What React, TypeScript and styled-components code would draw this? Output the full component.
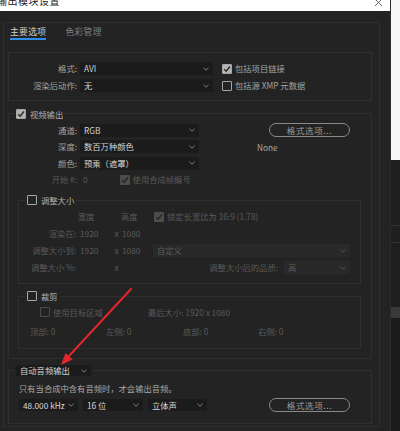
import styled, { createGlobalStyle } from "styled-components";

const GlobalStyle = createGlobalStyle`
  * { box-sizing: border-box; }
  html, body { margin: 0; padding: 0; background: #232323; }
  body {
    font-family: "Noto Sans CJK SC", "Noto Sans", sans-serif;
    font-size: 8.3px;
    color: #a3a3a3;
    overflow: hidden;
  }
`;

const Screen = styled.div`
  position: relative;
  display: flex;
  width: 400px;
  height: 431px;
  overflow: hidden;
`;

const Window = styled.div`
  width: 390px;
  height: 431px;
  background: #232323;
  display: flex;
  flex-direction: column;
`;

const TitleBar = styled.div`
  height: 11px;
  flex-shrink: 0;
  background: #ffffff;
  display: flex;
  justify-content: space-between;
  align-items: flex-start;
  overflow: hidden;
`;

const Title = styled.span`
  font-size: 10px;
  line-height: 12px;
  color: #1c1c1c;
  margin: -5px 0 0 -3px;
  letter-spacing: 0.5px;
`;

const CloseIcon = styled.svg`
  margin: -1px 7px 0 0;
`;

const SideStrip = styled.div`
  width: 10px;
  display: flex;
  flex-direction: column;
  background: #1e1e1e;
  border-left: 1px solid #2b2b2b;
`;

const StripPart = styled.div<{ $h: number; $bg: string; $line?: boolean }>`
  height: ${(p) => p.$h}px;
  flex-shrink: 0;
  background: ${(p) => p.$bg};
  border-bottom: ${(p) => (p.$line ? "1px solid #333" : "none")};
`;

const Panel = styled.div`
  margin: 11px 10px 0 3px;
  height: 405px;
  border: 1px solid #2e2e2e;
  padding: 0 7px 0 4px;
`;

const Tabs = styled.div`
  display: flex;
  gap: 19px;
  padding: 3px 0 0 2px;
`;

const Tab = styled.div<{ $active?: boolean }>`
  font-size: 8.8px;
  line-height: 12px;
  letter-spacing: 0.3px;
  color: ${(p) => (p.$active ? "#cfcfcf" : "#7f7f7f")};
  border-bottom: 2px solid ${(p) => (p.$active ? "#2f8fe8" : "transparent")};
`;

const FormatBox = styled.div`
  margin-top: 12px;
  height: 49px;
  border: 1px solid #2f2f2f;
  padding-top: 9px;
  display: flex;
  flex-direction: column;
  gap: 4px;
`;

const Group = styled.div<{ $h: number; $mt: number; $ml?: number }>`
  margin: ${(p) => p.$mt}px 0 0 ${(p) => p.$ml ?? 0}px;
  height: ${(p) => p.$h}px;
  border: 1px solid #2f2f2f;
  display: flex;
  flex-direction: column;
`;

const Legend = styled.div<{ $ml: number }>`
  display: flex;
  align-items: center;
  gap: 4px;
  width: fit-content;
  height: 10px;
  margin: -5.5px 0 0 ${(p) => p.$ml}px;
  padding: 0 2px;
  background: #232323;
  color: #b0b0b0;
  line-height: 10px;
`;

const Row = styled.div<{ $gap?: number; $mt?: number }>`
  display: flex;
  align-items: center;
  height: 13px;
  line-height: 13px;
  gap: ${(p) => p.$gap ?? 0}px;
  margin-top: ${(p) => p.$mt ?? 0}px;
  white-space: nowrap;
`;

const Label = styled.div<{ $w: number; $dim?: boolean }>`
  width: ${(p) => p.$w}px;
  flex-shrink: 0;
  text-align: right;
  color: ${(p) => (p.$dim ? "#595959" : "#a3a3a3")};
`;

const Text = styled.span<{ $dim?: boolean; $bright?: boolean; $ml?: number }>`
  color: ${(p) => (p.$dim ? "#5a5a5a" : p.$bright ? "#cfcfcf" : "#a3a3a3")};
  margin-left: ${(p) => p.$ml ?? 0}px;
`;

const SelectBox = styled.div<{ $w: number; $dim?: boolean; $h?: number; $ml?: number }>`
  width: ${(p) => p.$w}px;
  height: ${(p) => p.$h ?? 13}px;
  flex-shrink: 0;
  margin-left: ${(p) => p.$ml ?? 0}px;
  display: flex;
  align-items: center;
  justify-content: space-between;
  padding: 0 4px 0 4px;
  background: ${(p) => (p.$dim ? "#292929" : "#1b1b1b")};
  color: ${(p) => (p.$dim ? "#595959" : "#d6d6d6")};
  line-height: 13px;
`;

const Chevron = styled.svg`
  flex-shrink: 0;
`;

function Select({
  w,
  value,
  dim,
  h,
  ml,
}: {
  w: number;
  value: string;
  dim?: boolean;
  h?: number;
  ml?: number;
}) {
  return (
    <SelectBox $w={w} $dim={dim} $h={h} $ml={ml}>
      <span>{value}</span>
      <Chevron width="6" height="4" viewBox="0 0 6 4">
        <path
          d="M0.5 0.8 L3 3.2 L5.5 0.8"
          fill="none"
          stroke={dim ? "#555" : "#8c8c8c"}
          strokeWidth="0.9"
        />
      </Chevron>
    </SelectBox>
  );
}

const Box = styled.div<{ $checked?: boolean; $dim?: boolean }>`
  width: 10px;
  height: 10px;
  flex-shrink: 0;
  border-radius: 1px;
  border: 1.3px solid ${(p) => (p.$dim ? "#4c4c4c" : "#a6a6a6")};
  background: ${(p) =>
    p.$checked ? (p.$dim ? "#4c4c4c" : "#b4b4b4") : "transparent"};
  display: flex;
  align-items: center;
  justify-content: center;
`;

function Check({ checked, dim }: { checked?: boolean; dim?: boolean }) {
  return (
    <Box $checked={checked} $dim={dim}>
      {checked && (
        <svg width="8" height="8" viewBox="0 0 8 8">
          <path
            d="M1.2 4.2 L3.2 6.2 L6.9 1.5"
            fill="none"
            stroke={dim ? "#262626" : "#2a2a2a"}
            strokeWidth="1.4"
          />
        </svg>
      )}
    </Box>
  );
}

const CheckItem = styled.div<{ $ml?: number }>`
  display: flex;
  align-items: center;
  gap: 3px;
  margin-left: ${(p) => p.$ml ?? 0}px;
`;

const PillButton = styled.div<{ $mt?: number }>`
  width: 81px;
  height: 14px;
  margin-top: ${(p) => p.$mt ?? 0}px;
  border: 1.4px solid #8a8a8a;
  border-radius: 8px;
  display: flex;
  align-items: center;
  justify-content: center;
  color: #9c9c9c;
  font-size: 8.5px;
  letter-spacing: 0.6px;
  line-height: 12px;
`;

const VideoTop = styled.div`
  display: flex;
  margin-top: 5px;
`;

const LeftCol = styled.div`
  display: flex;
  flex-direction: column;
  gap: 3.5px;
`;

const RightCol = styled.div`
  display: flex;
  flex-direction: column;
  margin-left: 58px;
`;

const NoneText = styled.div`
  margin-top: 4px;
  height: 13px;
  line-height: 13px;
  color: #a8a8a8;
`;

const ResizeGrid = styled.div`
  display: grid;
  grid-template-columns: 61px 31px 11px 31px 1fr;
  grid-auto-rows: 13px;
  row-gap: 4px;
  margin-top: 5px;
  line-height: 13px;
  white-space: nowrap;
  color: #5a5a5a;
`;

const Cell = styled.div<{ $align?: string; $ml?: number }>`
  display: flex;
  align-items: center;
  justify-content: ${(p) => p.$align ?? "flex-start"};
  margin-left: ${(p) => p.$ml ?? 0}px;
`;

const RightLabelCell = styled(Cell)`
  justify-content: flex-end;
  padding-right: 4px;
`;

const TailCell = styled(Cell)`
  padding-right: 10px;
  gap: 6px;
`;

const CropCell = styled.div<{ $w: number }>`
  width: ${(p) => p.$w}px;
  flex-shrink: 0;
  display: flex;
  align-items: center;
  color: #5a5a5a;
`;

const AudioNote = styled.div`
  margin: 6.5px 0 0 10px;
  height: 13px;
  line-height: 13px;
  color: #a8a8a8;
`;

const AudioRow = styled.div`
  display: flex;
  align-items: center;
  gap: 5px;
  margin: 3px 0 0 10px;
`;

const AudioButtonSlot = styled.div`
  margin-left: 57px;
`;

const Overlay = styled.svg`
  position: absolute;
  left: 0;
  top: 0;
  pointer-events: none;
`;

export default function App() {
  return (
    <>
      <GlobalStyle />
      <Screen>
        <Window>
          <TitleBar>
            <Title>输出模块设置</Title>
            <CloseIcon width="9" height="8" viewBox="0 0 9 8">
              <path d="M1 0 L8 7 M8 0 L1 7" stroke="#555" strokeWidth="0.9" />
            </CloseIcon>
          </TitleBar>

          <Panel>
            <Tabs>
              <Tab $active>主要选项</Tab>
              <Tab>色彩管理</Tab>
            </Tabs>

            <FormatBox>
              <Row>
                <Label $w={68}>格式:</Label>
                <Select w={133} value="AVI" ml={3} />
                <CheckItem $ml={9}>
                  <Check checked />
                  <Text>包括项目链接</Text>
                </CheckItem>
              </Row>
              <Row>
                <Label $w={68}>渲染后动作:</Label>
                <Select w={133} value="无" ml={3} />
                <CheckItem $ml={9}>
                  <Check />
                  <Text>包括源 XMP 元数据</Text>
                </CheckItem>
              </Row>
            </FormatBox>

            <Group $h={246} $mt={12}>
              <Legend $ml={5}>
                <Check checked />
                <span>视频输出</span>
              </Legend>
              <VideoTop>
                <LeftCol>
                  <Row>
                    <Label $w={68}>通道:</Label>
                    <Select w={119} value="RGB" ml={3} />
                  </Row>
                  <Row>
                    <Label $w={68}>深度:</Label>
                    <Select w={119} value="数百万种颜色" ml={3} />
                  </Row>
                  <Row>
                    <Label $w={68}>颜色:</Label>
                    <Select w={119} value="预乘（遮罩）" ml={3} />
                  </Row>
                  <Row>
                    <Label $w={68} $dim>
                      开始 #:
                    </Label>
                    <Text $dim $ml={6}>
                      0
                    </Text>
                    <CheckItem $ml={32}>
                      <Check checked dim />
                      <Text $dim>使用合成帧编号</Text>
                    </CheckItem>
                  </Row>
                </LeftCol>
                <RightCol>
                  <PillButton $mt={-1} style={{ marginLeft: 12 }}>
                    格式选项...
                  </PillButton>
                  <NoneText>None</NoneText>
                </RightCol>
              </VideoTop>

              <Group $h={84} $mt={13.5} $ml={9} style={{ width: 343 }}>
                <Legend $ml={6}>
                  <Check />
                  <span>调整大小</span>
                </Legend>
                <ResizeGrid>
                  <Cell />
                  <Cell $ml={-2}>宽度</Cell>
                  <Cell />
                  <Cell $ml={-1}>高度</Cell>
                  <CheckItem $ml={1}>
                    <Check checked dim />
                    <Text $dim>锁定长宽比为 16:9 (1.78)</Text>
                  </CheckItem>

                  <RightLabelCell>渲染在:</RightLabelCell>
                  <Cell>1920</Cell>
                  <Cell $align="center">x</Cell>
                  <Cell>1080</Cell>
                  <Cell />

                  <RightLabelCell>调整大小到:</RightLabelCell>
                  <Cell>1920</Cell>
                  <Cell $align="center">x</Cell>
                  <Cell>1080</Cell>
                  <TailCell>
                    <Select w={197} value="自定义" dim />
                  </TailCell>

                  <RightLabelCell>调整大小 %:</RightLabelCell>
                  <Cell />
                  <Cell $align="center">x</Cell>
                  <Cell />
                  <TailCell $align="flex-end">
                    <span>调整大小后的品质:</span>
                    <Select w={66} value="高" dim />
                  </TailCell>
                </ResizeGrid>
              </Group>

              <Group $h={53} $mt={12} $ml={9} style={{ width: 343 }}>
                <Legend $ml={6}>
                  <Check />
                  <span>裁剪</span>
                </Legend>
                <Row $mt={4.5} style={{ paddingLeft: 21 }}>
                  <CropCell $w={108}>
                    <CheckItem>
                      <Check dim />
                      <Text $dim>使用目标区域</Text>
                    </CheckItem>
                  </CropCell>
                  <CropCell $w={120}>最后大小: 1920 x 1080</CropCell>
                </Row>
                <Row $mt={6} style={{ paddingLeft: 11 }}>
                  <CropCell $w={76}>顶部: 0</CropCell>
                  <CropCell $w={77}>左侧: 0</CropCell>
                  <CropCell $w={75}>底部: 0</CropCell>
                  <CropCell $w={60}>右侧: 0</CropCell>
                </Row>
              </Group>
            </Group>

            <Group $h={54} $mt={11}>
              <Legend $ml={5}>
                <Select w={75} h={11} value="自动音频输出" />
              </Legend>
              <AudioNote>只有当合成中含有音频时，才会输出音频。</AudioNote>
              <AudioRow>
                <Select w={59} h={12} value="48.000 kHz" />
                <Select w={60} h={12} value="16 位" />
                <Select w={59} h={12} value="立体声" />
                <AudioButtonSlot>
                  <PillButton>格式选项...</PillButton>
                </AudioButtonSlot>
              </AudioRow>
            </Group>
          </Panel>
        </Window>

        <SideStrip>
          <StripPart $h={160} $bg="#f7f7f7" />
          <StripPart $h={66} $bg="#1f1f1f" $line />
          <StripPart $h={17} $bg="#1f1f1f" $line />
          <StripPart $h={64} $bg="#1e1e1e" />
          <StripPart $h={11} $bg="#3a3a3a" />
          <StripPart $h={113} $bg="#1c1c1c" />
        </SideStrip>

        <Overlay width="400" height="431" viewBox="0 0 400 431">
          <line
            x1="131"
            y1="289"
            x2="69"
            y2="356"
            stroke="#e3262b"
            strokeWidth="2"
            strokeLinecap="round"
          />
          <polygon points="61,365 72.6,359.5 65.6,353" fill="#e3262b" />
        </Overlay>
      </Screen>
    </>
  );
}
